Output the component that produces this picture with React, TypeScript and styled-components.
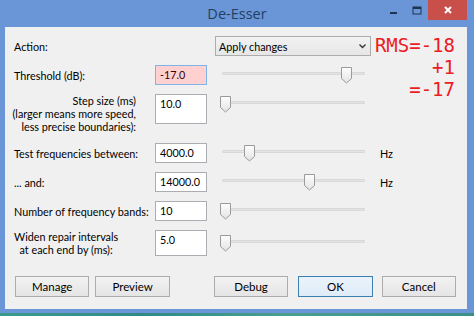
import React from "react";
import styled, { createGlobalStyle } from "styled-components";

const GlobalStyle = createGlobalStyle`
  html, body {
    margin: 0;
    padding: 0;
    background: #3f8f88;
  }
`;

const Window = styled.div`
  width: 474px;
  height: 316px;
  overflow: hidden;
  display: flex;
  flex-direction: column;
  background: #6a96d7;
  font-family: Lato, "Liberation Sans", sans-serif;
  font-size: 10.8px;
  color: #000;
  position: relative;
`;

const TitleBar = styled.div`
  height: 27px;
  flex: none;
  display: grid;
  grid-template-columns: minmax(0, 1fr) auto minmax(0, 1fr);
  align-items: start;
`;

const Title = styled.div`
  grid-column: 2;
  padding-top: 4px;
  font-family: "Open Sans", sans-serif;
  font-size: 14.5px;
  color: #243f63;
`;

const CaptionButtons = styled.div`
  grid-column: 3;
  display: flex;
  justify-content: flex-end;
  padding-right: 7px;
`;

const CaptionButton = styled.div<{ $close?: boolean }>`
  flex: none;
  width: ${(p) => (p.$close ? "39px" : "23px")};
  height: 20px;
  display: flex;
  align-items: center;
  justify-content: center;
  background: ${(p) => (p.$close ? "#c94f4b" : "transparent")};
`;

const Client = styled.div`
  flex: 1;
  margin: 0 7px 0 5px;
  background: #f0f0f0;
  padding: 9px 0 0 9px;
  display: flex;
  flex-direction: column;
  gap: 9px;
`;

const BottomFrame = styled.div`
  height: 4px;
  flex: none;
`;

const Desktop = styled.div`
  height: 3px;
  flex: none;
  background: linear-gradient(90deg, #3c9a8c, #2f8a86 30%, #4aa08e 60%, #3a8f88);
`;

const Row = styled.div<{ $h: number; $align?: string }>`
  display: grid;
  grid-template-columns: 133px 52px 156px auto;
  column-gap: 8px;
  height: ${(p) => p.$h}px;
  align-items: ${(p) => p.$align || "center"};
`;

const Label = styled.div<{ $text?: "left" | "right" | "center" }>`
  grid-column: 1;
  justify-self: ${(p) => (p.$text === "right" ? "end" : "start")};
  text-align: ${(p) => p.$text || "left"};
  line-height: 13px;
  white-space: nowrap;
  margin-right: ${(p) => (p.$text === "right" ? "11px" : "0")};
`;

const TextInput = styled.div<{ $invalid?: boolean; $h?: number }>`
  grid-column: 2;
  box-sizing: border-box;
  height: ${(p) => p.$h || 20}px;
  border: 1px solid ${(p) => (p.$invalid ? "#7eb4ea" : "#abadb3")};
  background: ${(p) => (p.$invalid ? "#ffd0d0" : "#fff")};
  color: ${(p) => (p.$invalid ? "#3a0000" : "#000")};
  padding: 1px 0 0 4px;
  line-height: 15px;
`;

const SelectBox = styled.div`
  grid-column: 3;
  box-sizing: border-box;
  height: 20px;
  border: 1px solid #acacac;
  background: linear-gradient(#f2f2f2, #e6e6e6);
  display: flex;
  align-items: center;
  justify-content: space-between;
  padding: 0 4px 0 3px;
`;

const SliderWrap = styled.div`
  grid-column: 3;
  position: relative;
  height: 20px;
`;

const Track = styled.div`
  position: absolute;
  left: 7px;
  right: 6px;
  top: 7px;
  height: 3px;
  background: #e4e4e4;
  border: 1px solid #d8d8d8;
  box-sizing: border-box;
  border-radius: 1px;
`;

const Thumb = styled.svg`
  position: absolute;
  top: 2px;
`;

const Unit = styled.div`
  grid-column: 4;
  padding-left: 1px;
`;

const ButtonRow = styled.div`
  display: flex;
  margin-top: 11px;
  margin-right: 11px;
  padding-left: 1px;
`;

const Button = styled.div<{ $primary?: boolean; $gap?: number }>`
  width: 75px;
  height: 21px;
  box-sizing: border-box;
  margin-left: ${(p) => p.$gap || 0}px;
  border: 1px solid ${(p) => (p.$primary ? "#3c7fb1" : "#acacac")};
  background: ${(p) =>
    p.$primary ? "linear-gradient(#eaf3fb, #dfecf8)" : "linear-gradient(#f2f2f2, #e5e5e5)"};
  display: flex;
  align-items: center;
  justify-content: center;
  font-size: 11.5px;
`;

const Annotation = styled.div`
  position: absolute;
  left: 371px;
  top: 34px;
  width: 84px;
  font-family: "DejaVu Sans Mono", "Liberation Mono", monospace;
  font-size: 19px;
  line-height: 22px;
  color: #ec1c24;
  text-align: right;
  white-space: pre;
`;

function Slider({ pos }: { pos: number }) {
  const left = 7 + Math.round(pos * 133);
  return (
    <SliderWrap>
      <Track />
      <Thumb width="11" height="17" viewBox="0 0 11 17" style={{ left: left - 2 }}>
        <defs>
          <linearGradient id="tg" x1="0" y1="0" x2="0" y2="1">
            <stop offset="0" stopColor="#fdfdfd" />
            <stop offset="1" stopColor="#e4e4e4" />
          </linearGradient>
        </defs>
        <path d="M0.5 0.5 H10.5 V11.5 L5.5 16 L0.5 11.5 Z" fill="url(#tg)" stroke="#9a9a9a" />
      </Thumb>
    </SliderWrap>
  );
}

export default function App() {
  return (
    <>
      <GlobalStyle />
      <Window>
        <TitleBar>
          <Title>De-Esser</Title>
          <CaptionButtons>
            <CaptionButton>
              <svg width="9" height="9" viewBox="0 0 9 9">
                <rect x="1" y="6" width="7" height="2" fill="#1f3250" />
              </svg>
            </CaptionButton>
            <CaptionButton>
              <svg width="10" height="9" viewBox="0 0 10 9">
                <rect x="1" y="1" width="8" height="7" fill="none" stroke="#1f3250" strokeWidth="1" />
                <rect x="1" y="1" width="8" height="2" fill="#1f3250" />
              </svg>
            </CaptionButton>
            <CaptionButton $close>
              <svg width="10" height="10" viewBox="0 0 10 10">
                <path d="M2 2 L8 8 M8 2 L2 8" stroke="#fff" strokeWidth="2" />
              </svg>
            </CaptionButton>
          </CaptionButtons>
        </TitleBar>
        <Client>
          <Row $h={20}>
            <Label>Action:</Label>
            <SelectBox>
              <span>Apply changes</span>
              <svg width="7" height="5" viewBox="0 0 7 5">
                <path d="M0.5 0.5 L3.5 3.5 L6.5 0.5" fill="none" stroke="#333" strokeWidth="1.3" />
              </svg>
            </SelectBox>
          </Row>
          <Row $h={20}>
            <Label>Threshold (dB):</Label>
            <TextInput $invalid>-17.0</TextInput>
            <Slider pos={0.91} />
          </Row>
          <Row $h={40} $align="start">
            <Label $text="right">
              Step size (ms)
              <br />
              (larger means more speed,
              <br />
              less precise boundaries):
            </Label>
            <TextInput $h={30}>10.0</TextInput>
            <Slider pos={0} />
          </Row>
          <Row $h={20}>
            <Label>Test frequencies between:</Label>
            <TextInput>4000.0</TextInput>
            <Slider pos={0.18} />
            <Unit>Hz</Unit>
          </Row>
          <Row $h={20}>
            <Label>... and:</Label>
            <TextInput>14000.0</TextInput>
            <Slider pos={0.63} />
            <Unit>Hz</Unit>
          </Row>
          <Row $h={20}>
            <Label>Number of frequency bands:</Label>
            <TextInput>10</TextInput>
            <Slider pos={0} />
          </Row>
          <Row $h={26}>
            <Label $text="center">
              Widen repair intervals
              <br />
              at each end by (ms):
            </Label>
            <TextInput $h={26}>5.0</TextInput>
            <Slider pos={0} />
          </Row>
          <ButtonRow>
            <Button>Manage</Button>
            <Button $gap={6}>Preview</Button>
            <Button $gap={44}>Debug</Button>
            <Button $primary $gap={10}>OK</Button>
            <Button $gap={9}>Cancel</Button>
          </ButtonRow>
        </Client>
        <BottomFrame />
        <Desktop />
        <Annotation>{"RMS=-18\n+1\n=-17"}</Annotation>
      </Window>
    </>
  );
}
